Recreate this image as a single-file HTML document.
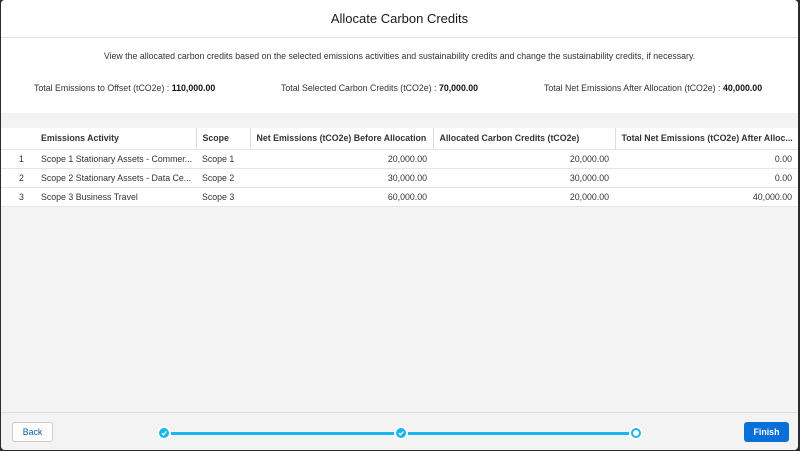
<!DOCTYPE html>
<html><head><style>
*{box-sizing:border-box;margin:0;padding:0}
body{width:800px;height:451px;background:#2b2b33;font-family:"Liberation Sans",sans-serif;color:#181818;overflow:hidden;position:relative}
.m{position:absolute;left:1px;top:0;width:797px;height:450px;background:#f3f3f3;border-radius:4px;overflow:hidden}
.hd{height:38px;background:#fff;border-bottom:1px solid #e0e0e0;text-align:center;font-size:13px;line-height:38px}
.bd{background:#fff;height:75px;font-size:8.8px}
.desc{text-align:center;padding-top:13px;color:#333}
.tot{position:absolute;top:83px;font-size:8.8px;color:#333}
.tot b{color:#111}
table{position:absolute;top:128px;left:0;width:797px;border-collapse:collapse;font-size:8.8px;background:#fff;table-layout:fixed}
th{text-align:left;font-weight:bold;height:21px;padding:0 6px;border-left:1px solid #ddd;color:#333;background:#fff;border-bottom:1px solid #e5e5e5;white-space:nowrap;overflow:hidden}
th:first-child,th:nth-child(2){border-left:none}
td{height:19px;padding:0 6px;border-bottom:1px solid #e5e5e5;color:#333;white-space:nowrap;overflow:hidden}
.r{text-align:right}
.ft{position:absolute;top:412px;left:0;width:797px;height:38px;border-top:1px solid #ddd;background:#f3f3f3}
.back{position:absolute;left:11px;top:9px;width:41px;height:20px;border:1px solid #ccc;border-radius:3px;background:#fff;color:#0b5cab;font-size:8.8px;text-align:center;line-height:18px}
.fin{position:absolute;left:743px;top:9px;width:45px;height:20px;border-radius:3px;background:#0b6fd8;color:#fff;font-size:8.8px;font-weight:bold;text-align:center;line-height:20px}
.line{position:absolute;top:19px;height:3px;background:#1ab5ef}
.dot{position:absolute;top:15px;width:10px;height:10px;border-radius:50%;background:#1ab5ef;box-shadow:0 0 0 2px #fff}
.dot svg{display:block}
.ring{background:#fff;border:2.5px solid #1ab5ef}
</style></head><body>
<div class="m">
<div class="hd">Allocate Carbon Credits</div>
<div class="bd"><div class="desc">View the allocated carbon credits based on the selected emissions activities and sustainability credits and change the sustainability credits, if necessary.</div></div>
<div class="tot" style="left:33px">Total Emissions to Offset (tCO2e) : <b>110,000.00</b></div>
<div class="tot" style="left:280px">Total Selected Carbon Credits (tCO2e) : <b>70,000.00</b></div>
<div class="tot" style="left:543px">Total Net Emissions After Allocation (tCO2e) : <b>40,000.00</b></div>
<table>
<colgroup><col style="width:34px"><col style="width:161px"><col style="width:54px"><col style="width:183px"><col style="width:182px"><col></colgroup>
<tr><th></th><th>Emissions Activity</th><th>Scope</th><th>Net Emissions (tCO2e) Before Allocation</th><th>Allocated Carbon Credits (tCO2e)</th><th>Total Net Emissions (tCO2e) After Alloc...</th></tr>
<tr><td style="padding-left:18px">1</td><td>Scope 1 Stationary Assets - Commer...</td><td>Scope 1</td><td class="r">20,000.00</td><td class="r">20,000.00</td><td class="r">0.00</td></tr>
<tr><td style="padding-left:18px">2</td><td>Scope 2 Stationary Assets - Data Ce...</td><td>Scope 2</td><td class="r">30,000.00</td><td class="r">30,000.00</td><td class="r">0.00</td></tr>
<tr><td style="padding-left:18px">3</td><td>Scope 3 Business Travel</td><td>Scope 3</td><td class="r">60,000.00</td><td class="r">20,000.00</td><td class="r">40,000.00</td></tr>
</table>
<div class="ft">
<div class="back">Back</div>
<div class="line" style="left:165px;width:470px"></div>
<div class="dot" style="left:158px"><svg width="10" height="10"><path d="M2.8 5.2l1.6 1.6 3-3.3" stroke="#fff" stroke-width="1.3" fill="none"/></svg></div>
<div class="dot" style="left:395px"><svg width="10" height="10"><path d="M2.8 5.2l1.6 1.6 3-3.3" stroke="#fff" stroke-width="1.3" fill="none"/></svg></div>
<div class="dot ring" style="left:630px"></div>
<div class="fin">Finish</div>
</div>
</div>
</body></html>
